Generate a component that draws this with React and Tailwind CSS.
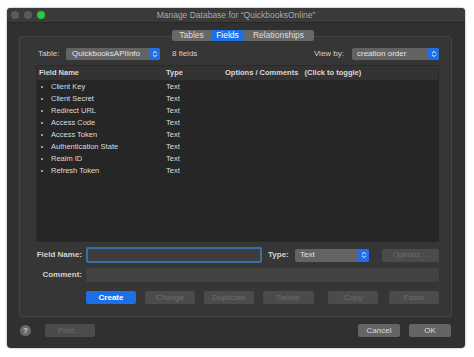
import { ChevronsUpDown } from 'lucide-react';

const fields = [
  'Client Key',
  'Client Secret',
  'Redirect URL',
  'Access Code',
  'Access Token',
  'Authentication State',
  'Realm ID',
  'Refresh Token',
];

function Stepper() {
  return (
    <span className="flex h-full w-[11px] items-center justify-center rounded-r-[2px] bg-[#1f6fe6]">
      <ChevronsUpDown className="h-[8px] w-[8px] text-white" strokeWidth={3} />
    </span>
  );
}

function Btn({ children, primary, disabled, className = '' }) {
  const tone = primary
    ? 'bg-[#1d6fe8] text-white'
    : disabled
      ? 'bg-[#4b4b4b] text-[#6c6c6c]'
      : 'bg-[#646464] text-[#dcdcdc]';
  return (
    <div className={`flex h-[13px] items-center justify-center rounded-[2px] text-[8px] leading-none ${tone} ${className}`}>
      {children}
    </div>
  );
}

export default function App() {
  return (
    <div className="h-[357px] w-[474px] bg-white pl-[7px] pt-[8px]" style={{ fontFamily: '"Liberation Sans", Arial, sans-serif' }}>
      <div className="flex h-[340px] w-[458px] flex-col overflow-hidden rounded-[4px] bg-[#303030] shadow-[0_0_2px_rgba(0,0,0,0.5)]">
        {/* barra de título */}
        <div className="relative flex h-[15px] items-center justify-center border-b border-[#262626] bg-[#3a3a3a]">
          <div className="absolute left-[4px] top-[3px] flex gap-[5px]">
            <span className="h-[8px] w-[8px] rounded-full bg-[#5a5a5a]" />
            <span className="h-[8px] w-[8px] rounded-full bg-[#5a5a5a]" />
            <span className="h-[8px] w-[8px] rounded-full bg-[#2ac940]" />
          </div>
          <span className="text-[8.5px] text-[#a9a9a9]">Manage Database for “QuickbooksOnline”</span>
        </div>

        {/* pestañas */}
        <div className="relative z-10 mt-[7px] flex h-[11px] justify-center pl-[13px] text-[8.5px] leading-none">
          <div className="flex overflow-hidden rounded-[2px]">
            <div className="flex w-[40px] items-center justify-center bg-[#676767] text-[#dedede]">Tables</div>
            <div className="flex w-[32px] items-center justify-center bg-[#1d6fe8] text-white">Fields</div>
            <div className="flex w-[70px] items-center justify-center bg-[#676767] text-[#dedede]">Relationships</div>
          </div>
        </div>

        {/* panel */}
        <div className="mx-[12px] mr-[13px] -mt-[5px] flex h-[281px] flex-col rounded-[3px] border border-[#444] bg-[#363636] pl-[16px] pr-[12px] pt-[11px]">
          <div className="flex h-[12px] items-center text-[8px] text-[#d2d2d2]">
            <span className="ml-[2px] w-[28px]">Table:</span>
            <div className="flex h-[12px] w-[94px] items-center justify-between rounded-[2px] bg-[#636363] pl-[6px]">
              <span className="text-[#e4e4e4]">QuickbooksAPIInfo</span>
              <Stepper />
            </div>
            <span className="ml-[12px]">8 fields</span>
            <span className="ml-auto mr-[8px]">View by:</span>
            <div className="flex h-[12px] w-[87px] items-center justify-between rounded-[2px] bg-[#636363] pl-[5px]">
              <span className="text-[#e4e4e4]">creation order</span>
              <Stepper />
            </div>
          </div>

          {/* lista de campos */}
          <div className="mt-[5px] flex h-[177px] flex-col border border-[#2a2a2a] bg-[#262626] text-[7.5px] text-[#dcdcdc]">
            <div className="flex h-[14px] shrink-0 items-center bg-[#333] font-bold text-[#dadada]">
              <span className="w-[129px] pl-[2px]">Field Name</span>
              <span className="w-[59px]">Type</span>
              <span>Options / Comments&nbsp;&nbsp;&nbsp;(Click to toggle)</span>
            </div>
            <div className="pt-[1px]">
              {fields.map((f) => (
                <div key={f} className="flex h-[12px] items-center">
                  <span className="flex w-[14px] pl-[4px]">
                    <span className="h-[2px] w-[2px] bg-[#9a9a9a]" />
                  </span>
                  <span className="w-[115px]">{f}</span>
                  <span>Text</span>
                </div>
              ))}
            </div>
          </div>

          {/* nombre y tipo */}
          <div className="mt-[5px] flex h-[16px] items-center text-[8px] text-[#d4d4d4]">
            <span className="w-[46px] text-right font-bold">Field Name:</span>
            <div className="ml-[4px] h-[16px] w-[176px] rounded-[2px] border-[2px] border-[#3a6ea5] bg-[#3c3c3c]" />
            <span className="ml-[6px] w-[27px] font-bold">Type:</span>
            <div className="flex h-[13px] w-[74px] items-center justify-between rounded-[2px] bg-[#636363] pl-[5px]">
              <span className="text-[#e4e4e4]">Text</span>
              <Stepper />
            </div>
            <Btn disabled className="ml-auto w-[57px]">Options…</Btn>
          </div>

          <div className="mt-[5px] flex h-[14px] items-center text-[8px] text-[#d4d4d4]">
            <span className="w-[46px] text-right font-bold">Comment:</span>
            <div className="ml-[4px] h-[14px] flex-1 rounded-[1px] bg-[#424242]" />
          </div>

          {/* botones */}
          <div className="mt-[9px] flex h-[13px] pl-[50px]">
            <Btn primary className="w-[50px] font-bold">Create</Btn>
            <Btn disabled className="ml-[9px] w-[50px]">Change</Btn>
            <Btn disabled className="ml-[9px] w-[50px]">Duplicate</Btn>
            <Btn disabled className="ml-[9px] w-[51px]">Delete</Btn>
            <Btn disabled className="ml-[14px] w-[50px]">Copy</Btn>
            <Btn disabled className="ml-auto w-[50px]">Paste</Btn>
          </div>
        </div>

        {/* pie */}
        <div className="mt-[7px] flex h-[13px] items-center pl-[13px] pr-[14px]">
          <span className="flex h-[11px] w-[11px] items-center justify-center rounded-full bg-[#6a6a6a] text-[8px] font-bold leading-none text-[#d0d0d0]">?</span>
          <Btn disabled className="ml-[14px] w-[50px]">Print…</Btn>
          <Btn className="ml-auto w-[42px]">Cancel</Btn>
          <Btn className="ml-[9px] w-[42px]">OK</Btn>
        </div>
      </div>
    </div>
  );
}
